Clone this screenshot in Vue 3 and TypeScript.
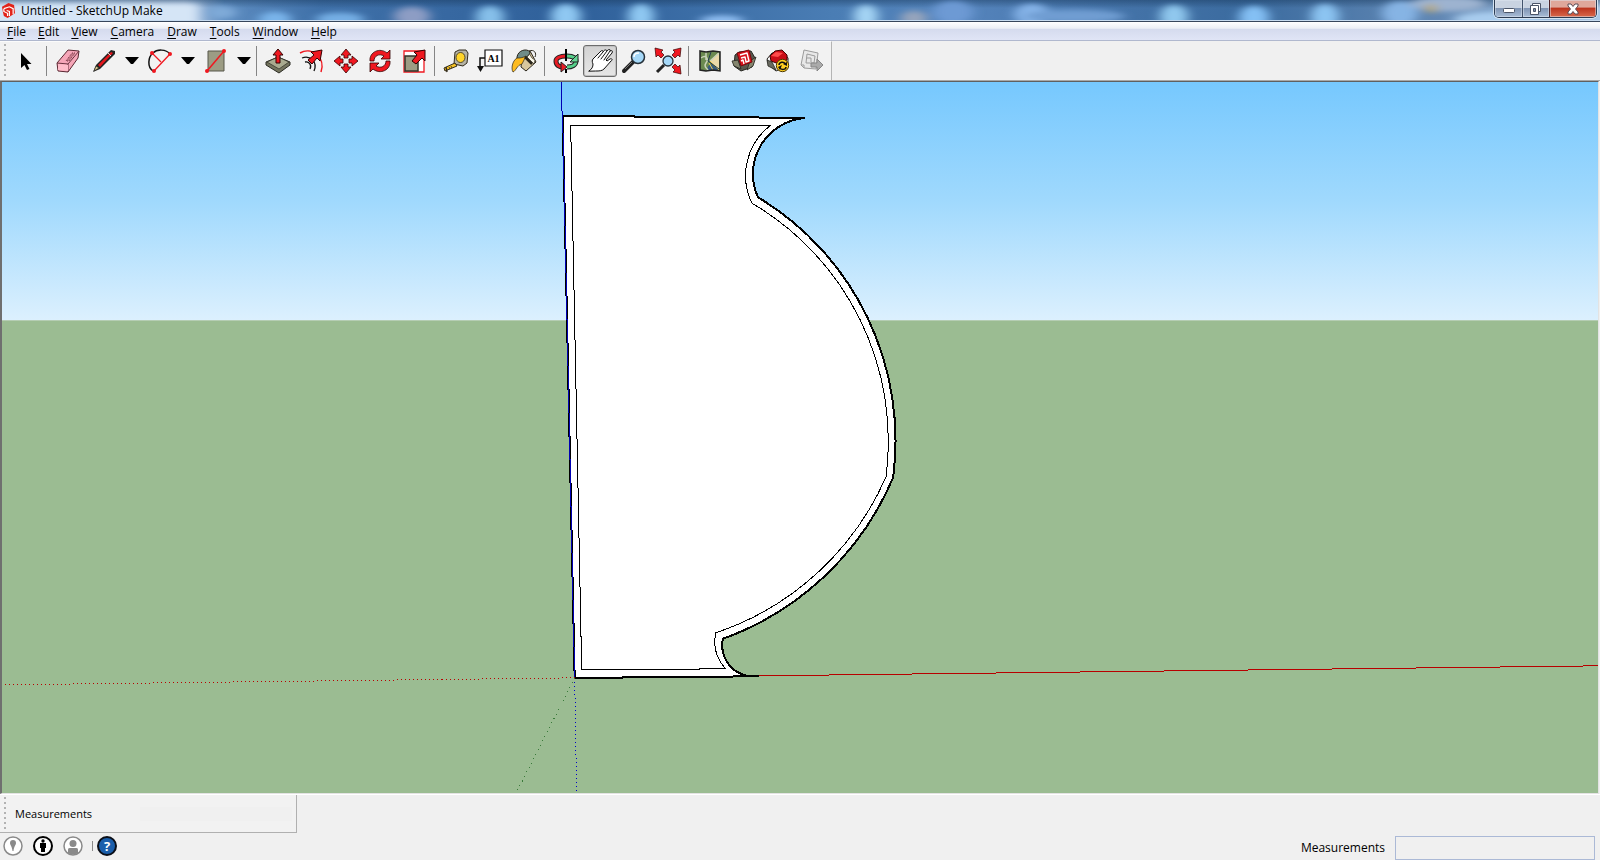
<script setup lang="ts">
import { ref } from 'vue'

const menus: string[] = ['File', 'Edit', 'View', 'Camera', 'Draw', 'Tools', 'Window', 'Help']

interface Tool { id: string; label: string; drop?: boolean }

const groups: Tool[][] = [
  [{ id: 'select', label: 'Select' }],
  [
    { id: 'eraser', label: 'Eraser' },
    { id: 'line', label: 'Line', drop: true },
    { id: 'arc', label: 'Arc', drop: true },
    { id: 'rect', label: 'Rectangle', drop: true },
  ],
  [
    { id: 'push', label: 'Push/Pull' },
    { id: 'offset', label: 'Offset' },
    { id: 'move', label: 'Move' },
    { id: 'rotate', label: 'Rotate' },
    { id: 'scale', label: 'Scale' },
  ],
  [
    { id: 'tape', label: 'Tape Measure' },
    { id: 'text', label: 'Text' },
    { id: 'paint', label: 'Paint Bucket' },
  ],
  [
    { id: 'orbit', label: 'Orbit' },
    { id: 'pan', label: 'Pan' },
    { id: 'zoom', label: 'Zoom' },
    { id: 'extents', label: 'Zoom Extents' },
  ],
  [
    { id: 'map', label: 'Add Location' },
    { id: 'warehouse', label: '3D Warehouse' },
    { id: 'extension', label: 'Extension Warehouse' },
    { id: 'layout', label: 'Send to LayOut' },
  ],
]

const active = ref('pan')
const measure = ref('')
const dockMeasure = ref('')

interface Glow { x: number; y: number; w: number; h: number; c: string }
const glows: Glow[] = [
  { x: 275, y: 20, w: 16, h: 8, c: '#79b4ea' },
  { x: 340, y: 20, w: 24, h: 7, c: '#74aee4' },
  { x: 412, y: 17, w: 18, h: 10, c: '#8d9dc4' },
  { x: 490, y: 18, w: 14, h: 12, c: '#86c0ea' },
  { x: 566, y: 17, w: 15, h: 13, c: '#8fc8f2' },
  { x: 641, y: 17, w: 13, h: 13, c: '#8fc8f2' },
  { x: 722, y: 21, w: 22, h: 5, c: '#8dbcf0' },
  { x: 866, y: 17, w: 12, h: 12, c: '#a4d4f4' },
  { x: 914, y: 19, w: 13, h: 8, c: '#96a4bc' },
  { x: 953, y: 13, w: 20, h: 12, c: '#6d9ad4' },
  { x: 1032, y: 15, w: 18, h: 11, c: '#85b3e8' },
  { x: 1075, y: 17, w: 50, h: 7, c: '#709dd2' },
  { x: 1174, y: 17, w: 14, h: 12, c: '#90c8ee' },
  { x: 1254, y: 18, w: 15, h: 12, c: '#84c0f4' },
  { x: 1325, y: 17, w: 14, h: 13, c: '#8cc4f2' },
  { x: 1400, y: 14, w: 18, h: 13, c: '#86b4e4' },
  { x: 1448, y: 4, w: 38, h: 8, c: '#9db3d0' },
  { x: 1500, y: 20, w: 46, h: 8, c: '#a8ccee' },
]
</script>

<template>
  <div class="window">
    <header class="titlebar">
      <svg class="glass" viewBox="0 0 1600 21" preserveAspectRatio="none" aria-hidden="true">
        <defs>
          <linearGradient id="aero" x1="0" x2="1" y1="0" y2="0">
            <stop offset="0" stop-color="#b9d3ee" />
            <stop offset="0.115" stop-color="#b5cbe6" />
            <stop offset="0.14" stop-color="#5d8cc0" />
            <stop offset="0.2" stop-color="#3f70a8" />
            <stop offset="0.36" stop-color="#2f609a" />
            <stop offset="0.52" stop-color="#4a7db4" />
            <stop offset="0.6" stop-color="#5584bc" />
            <stop offset="0.7" stop-color="#4473a8" />
            <stop offset="0.78" stop-color="#3b6b9f" />
            <stop offset="0.9" stop-color="#6288b4" />
            <stop offset="1" stop-color="#aac8e6" />
          </linearGradient>
          <linearGradient id="shade" x1="0" x2="0" y1="0" y2="1">
            <stop offset="0" stop-color="#17375a" stop-opacity="0.45" />
            <stop offset="0.4" stop-color="#17375a" stop-opacity="0" />
          </linearGradient>
          <filter id="soft" x="-50%" y="-50%" width="200%" height="200%"><feGaussianBlur stdDeviation="6 3" /></filter>
        </defs>
        <rect width="1600" height="21" fill="url(#aero)" />
        <rect width="1600" height="21" fill="url(#shade)" />
        <g filter="url(#soft)">
          <rect x="-10" y="4" width="208" height="24" fill="#d5e5f6" />
          <ellipse v-for="g in glows" :key="g.x" :cx="g.x" :cy="g.y" :rx="g.w" :ry="g.h" :fill="g.c" />
          <ellipse cx="222" cy="13" rx="14" ry="7" fill="#7faad8" />
          <circle cx="1431" cy="9" r="5" fill="#bba765" />
        </g>
      </svg>
      <svg class="appicon" viewBox="0 0 14 16" aria-hidden="true">
        <path d="M0 4 7 0l6 2 1 9-8 5-4-2-1-4z" fill="#e2231a" />
        <path d="M2 6 8 4l4 2v6M2 6v3l4 2v3M5 8l3 1v5" fill="none" stroke="#fff" stroke-width="1.3" />
      </svg>
      <h1 class="title">Untitled - SketchUp Make</h1>
      <div class="controls">
        <button type="button" class="ctl min" aria-label="Minimize">
          <svg viewBox="0 0 14 14" width="14" height="14"><rect x="1.500" y="6.500" width="11" height="4" rx="1" fill="#fff" stroke="#4b5568" /></svg>
        </button>
        <button type="button" class="ctl max" aria-label="Restore">
          <svg viewBox="0 0 14 14" width="14" height="14">
            <path d="M3.500 1.500h8v8h-8z" fill="#fff" stroke="#4b5568" />
            <path d="M1.500 3.500h8v9h-8z" fill="#fff" stroke="#4b5568" />
            <path d="M4.500 6.500h2v3h-2z" fill="#8292ac" stroke="#4b5568" />
          </svg>
        </button>
        <button type="button" class="ctl close" aria-label="Close">
          <svg viewBox="0 0 14 12" width="14" height="12"><path d="M2 1h3l2 2.500L9 1h3v2L9.500 6 12 9v2H9L7 8.500 5 11H2V9l2.500-3L2 3z" fill="#fff" stroke="#5a4a54" /></svg>
        </button>
      </div>
    </header>

    <nav class="menubar">
      <button v-for="m in menus" :key="m" type="button" class="menu"><u>{{ m[0] }}</u>{{ m.slice(1) }}</button>
    </nav>

    <div class="toolrow">
      <div class="toolbar" role="toolbar" aria-label="Getting Started">
        <span class="grip" />
        <template v-for="(group, gi) in groups" :key="gi">
          <span v-if="gi" class="sep" />
          <template v-for="t in group" :key="t.id">
            <button
              type="button"
              :class="['tool', { on: active === t.id, wide: t.drop }]"
              :aria-label="t.label"
              :aria-pressed="active === t.id"
              @click="active = t.id"
            >
              <svg class="icon" viewBox="0 0 24 24">
                <g v-if="t.id === 'select'">
                  <path d="M7 4v15l3.500-3 2.500 5 2.500-1-2.500-5h4.500z" fill="#000" />
                </g>
                <g v-else-if="t.id === 'eraser'" stroke-linejoin="round">
                  <path d="M1 14 12 1l11 1-1 7-10 14-10-1z" fill="#f6a6b8" stroke="#5a2832" />
                  <path d="m1 14 11 1L23 2M12 15v8" fill="none" stroke="#6a3440" />
                  <path d="M2 15l10 1v6L2 21z" fill="#ffbdca" />
                  <path d="m10 12 6-8 3 0-6 8z" fill="#c57888" stroke="#7a3a48" stroke-dasharray="1 1" />
                </g>
                <g v-else-if="t.id === 'line'">
                  <path d="M1 23 4 16 19 1l4 1v3L8 20z" fill="#222" />
                  <path d="M6 16 19 3l2 1L8 18z" fill="#e3161c" />
                  <path d="m2 22 2-5 3 2z" fill="#d9c88b" stroke="#222" stroke-width=".6" />
                  <path d="m16 4 3 3" stroke="#ddd" />
                </g>
                <g v-else-if="t.id === 'arc'" fill="none">
                  <path d="M5 22C-1 18 0 8 5 4 9 0 18 0 22 5" stroke="#111" stroke-width="1.500" />
                  <path d="M6 22 22 5M4 4l9 9" stroke="#f01820" stroke-width="1.300" />
                  <g fill="#f01820"><circle cx="6" cy="22" r="2" /><circle cx="22" cy="5" r="2" /><circle cx="4" cy="4" r="2" /></g>
                </g>
                <g v-else-if="t.id === 'rect'">
                  <path d="M4 2h16v20H4z" fill="#9c9c84" stroke="#56564a" />
                  <path d="M3 22 20 2" stroke="#f01820" stroke-width="1.500" />
                  <circle cx="3" cy="22" r="2" fill="#f01820" /><circle cx="20" cy="2" r="2" fill="#f01820" />
                </g>
                <g v-else-if="t.id === 'push'" stroke-linejoin="round">
                  <path d="m0 13 12-5 12 5v3l-11 8L0 16z" fill="#74745e" stroke="#2c2c24" />
                  <path d="m1 13 11-5 11 5-10 7z" fill="#a9aa8f" stroke="#2c2c24" stroke-width=".7" />
                  <path d="M12 0 7 6h3v8h4V6h3z" fill="#f01820" stroke="#300" />
                </g>
                <g v-else-if="t.id === 'offset'" fill="none">
                  <path d="M0 4C12-3 26 9 21 23" stroke="#f01820" stroke-width="1.500" />
                  <path d="M2 9c8-3 16 4 12 13M5 13c4-1 7 3 5 7" stroke="#111" stroke-width="1.300" />
                  <path d="m8 11 6-5-3-3 11-2-2 11-3-3-5 6z" fill="#f01820" stroke="#300" />
                </g>
                <g v-else-if="t.id === 'move'" fill="#f01820" stroke="#300" stroke-width=".8">
                  <path d="m12 0 5 6h-3v3h-4V6H7z" /><path d="m12 24-5-6h3v-3h4v3h3z" />
                  <path d="m0 12 6-5v3h3v4H6v3z" /><path d="m24 12-6 5v-3h-3v-4h3V7z" />
                </g>
                <g v-else-if="t.id === 'rotate'" fill="#f01820" stroke="#300" stroke-width=".8" stroke-linejoin="round">
                  <path d="M2 12C1 3 12-2 19 4l3-3v9h-9l3-3C11 4 6 7 6 12z" />
                  <path d="M22 12c1 9-10 14-17 8l-3 3v-9h9l-3 3c5 3 10 0 10-5z" />
                </g>
                <g v-else-if="t.id === 'scale'">
                  <path d="M2 2h20v21H2z" fill="#fff" stroke="#f01820" stroke-width="1.300" />
                  <path d="M3 7h13v15H3z" fill="#9c9c84" stroke="#33332a" stroke-width="1.500" />
                  <path d="m10 12 5-6-3-3 11-2v11l-3-3-6 6z" fill="#f01820" stroke="#300" />
                </g>
                <g v-else-if="t.id === 'tape'" stroke="#332c1c">
                  <path d="m11 3 4-2 7 0 2 3-1 10-4 3-9-2z" fill="#b5b3a5" />
                  <ellipse cx="16.500" cy="8.500" rx="4.500" ry="5" fill="#ffd429" stroke-width=".8" />
                  <path d="M11 14 0 19l1 3 12-5z" fill="#f7c324" />
                  <path d="m2 18 1 5" stroke-width="1.500" /><path d="m5 18 1 2m1-3 1 2" stroke-width=".8" />
                </g>
                <g v-else-if="t.id === 'text'">
                  <path d="M7 1h17v16H7z" fill="#fff" stroke="#111" stroke-width="1.200" />
                  <path d="M7 9H2v9" fill="none" stroke="#111" stroke-width="1.500" /><path d="M-1 17h7l-3.500 6z" fill="#111" />
                  <text x="15.500" y="13" class="glyph" text-anchor="middle">A1</text>
                </g>
                <g v-else-if="t.id === 'paint'" stroke="#2a261c" stroke-linejoin="round">
                  <path d="m10 8 8-6 6 11-10 9-5-4z" fill="#d8c79e" />
                  <path d="m17 4 3 5 3 2-1 4-7-7z" fill="#faf7ea" stroke-width=".7" />
                  <path d="M5 8C6 1 15-1 18 3c0 4-6 7-13 7z" fill="#6f8c88" />
                  <path d="M5 9C0 12-1 20 1 23c3-1 4-7 9-8l4-8c-4 2-6 2-9 2z" fill="#fdbb20" stroke-width=".7" />
                  <path d="M13 8 20 15" stroke-width="2.500" /><path d="M17 2c5-2 8 2 6 6" fill="none" />
                </g>
                <g v-else-if="t.id === 'orbit'" fill="none" stroke="#222">
                  <path d="M13 7c6 0 9 2 9 5 0 4-4 6-9 6" stroke-width="5" /><path d="M13 7c6 0 9 2 9 5 0 4-4 6-9 6" stroke="#56cf8a" stroke-width="3" />
                  <path d="M24 5v8h-8z" fill="#64d694" />
                  <path d="M12 7c-6 0-10 2-10 5 0 4 3 6 7 6" stroke-width="5" /><path d="M12 7c-6 0-10 2-10 5 0 4 3 6 7 6" stroke="#e81c24" stroke-width="3" />
                  <path d="m7 13 6 5-6 5z" fill="#e81c24" />
                  <path d="M12 0v12M12 20v4" stroke="#000" stroke-width="2" />
                </g>
                <g v-else-if="t.id === 'pan'" fill="#fff" stroke="#111" stroke-linejoin="round" stroke-linecap="round">
                  <path d="M1 22c3-2 4-4 4-7-1-2-1-4 0-5l4-4 4-4c1-1 3 0 2 1 1-2 3-3 4-1 1-2 4-2 3 0 2-1 3 0 2 2l-6 7 1 1 3-2c2-1 3 1 1 2l-7 8c-2 2-5 2-8 2z" />
                  <path d="m15 3-5 6m9-7-6 8m9-8-6 9" fill="none" />
                </g>
                <g v-else-if="t.id === 'zoom'">
                  <path d="m2 22 9-9" stroke="#222" stroke-width="4" stroke-linecap="round" /><path d="m3 20 7-7" stroke="#777" />
                  <circle cx="16" cy="8" r="6.500" fill="#a5d8f8" stroke="#26313a" stroke-width="1.500" /><path d="M12 8c0-3 2-4 5-4" fill="none" stroke="#fff" stroke-width="1.500" />
                </g>
                <g v-else-if="t.id === 'extents'">
                  <path d="m1 23 7-7" stroke="#222" stroke-width="3" />
                  <circle cx="12" cy="12" r="5" fill="#a5d8f8" stroke="#26313a" stroke-width="1.300" />
                  <g fill="#f01820" stroke="#300" stroke-width=".7">
                    <path d="m-1-1 8 2-2 2 3 3-3 3-3-3-2 2z" /><path d="m25-1-8 2 2 2-3 3 3 3 3-3 2 2z" /><path d="m25 25-8-2 2-2-3-3 3-3 3 3 2-2z" />
                  </g>
                </g>
                <g v-else-if="t.id === 'map'">
                  <path d="m2 2 6 1 7-1 7 1v19l-7-1-7 1-6-1z" fill="#6b8a50" />
                  <path d="M21 3v18l-9-9z" fill="#ead9a8" /><path d="M9 21c0-3 2-5 4-6l8 6-6 0z" fill="#375b80" />
                  <path d="M3 9c5-4 8 1 5 5s1 5 2 7M8 3v8M21 4l-9 8" fill="none" stroke="#c9d2b8" stroke-width="1.500" />
                  <path d="m12 12 9 9M11 14l4 7" stroke="#f0d052" /><path d="M13 3 10 12l11 8" fill="none" stroke="#233a50" />
                  <path d="m2 2 6 1 7-1 7 1v19l-7-1-7 1-6-1z" fill="none" stroke="#222" stroke-width="1.500" />
                </g>
                <g v-else-if="t.id === 'warehouse'" stroke-linejoin="round">
                  <path d="m3 6 4-3 12-1 4 7-3 9-11 4-7-5z" fill="#58594e" stroke="#252520" />
                  <path d="m0 12 6-1 3 9-7-3zM18 12l6-4-3 9-6 4z" fill="#85866f" stroke="#252520" stroke-width=".8" />
                  <path d="m5 4 12-3 3 12-11 4z" fill="#d9121b" stroke="#750a0e" />
                  <path d="m8 6 7-2 2 8-3 1-1-5-4 1m0 3 2-1 1 4" fill="none" stroke="#fff" stroke-width="1.400" />
                </g>
                <g v-else-if="t.id === 'extension'" stroke-linejoin="round">
                  <path d="m1 10 5-6 11-1 5 6 0 8-12 5-7-6z" fill="#f2f2f2" stroke="#252520" />
                  <path d="m4 7 5-5 7-1 5 5v5l-8 4-8-3z" fill="#c90d17" stroke="#400" /><path d="m5 7 5-4 7 1-5 4z" fill="#ff4b4b" />
                  <path d="m1 11 5 2 4 8-8-4z" fill="#696a60" stroke="#252520" stroke-width=".8" />
                  <circle cx="16.500" cy="16.500" r="6.200" fill="#ffce21" stroke="#493500" />
                  <path d="M13 16c0-3 5-4 6-1m1 3c0 3-5 3-6 1" fill="none" stroke="#111" stroke-width="1.500" /><path d="m17 15 4-2v4zM12 18l4-2-2 5z" fill="#111" />
                </g>
                <g v-else fill="#e8e8e8" stroke="#9b9b9b" stroke-linejoin="round">
                  <path d="m4 1 14 3-2 16-12-1-3-3z" /><path d="M1 16h3v3M7 5l8 2-1 7H6zM7 9h4v4" fill="none" />
                  <path d="M11 14h6v-4l6 6-6 6v-4h-6z" fill="#aaa" stroke="#858585" />
                </g>
              </svg>
            </button>
            <button v-if="t.drop" type="button" class="caret" :aria-label="t.label + ' tools'">
              <svg viewBox="0 0 14 8" width="14" height="8"><path d="M0 0h14L8 7H6z" fill="#000" /></svg>
            </button>
          </template>
        </template>
      </div>
    </div>

    <main class="viewport">
      <svg class="scene" viewBox="2 82 1596 710" preserveAspectRatio="xMidYMid slice" role="img" aria-label="Model view">
        <defs>
          <linearGradient id="sky" x1="0" x2="0" y1="0" y2="1">
            <stop offset="0" stop-color="#76c8fe" />
            <stop offset="0.5" stop-color="#a0d9fd" />
            <stop offset="1" stop-color="#dcf0fe" />
          </linearGradient>
        </defs>
        <rect x="2" y="82" width="1596" height="238" fill="url(#sky)" />
        <rect x="2" y="320" width="1596" height="473" fill="#9bbc92" />
        <g fill="none" shape-rendering="crispEdges">
          <path d="M563 116 720 117 805 118A56 56 0 0 0 758 197A284 284 0 0 1 893 477A292 292 0 0 1 723 638A31 31 0 0 0 759 675L720 676 575 677z" fill="#fff" stroke="#000" stroke-width="2" />
          <path d="M571 125H771A63 63 0 0 0 752 203A276 276 0 0 1 886 476A284 284 0 0 1 716 632A38 38 0 0 0 726 668L582 669z" stroke="#000" />
          <path d="M562 82V108L563 116 575 677" stroke="#0000b4" />
          <path d="M575 677 2 684" stroke="#b80000" stroke-dasharray="1 3" />
          <path d="M759 675 1598 665" stroke="#b80000" />
          <path d="M575 677 577 793" stroke="#0000c8" stroke-dasharray="1 3" />
          <path d="M575 677 516 793" stroke="#3a7a3a" stroke-dasharray="1 4" />
        </g>
      </svg>
    </main>

    <section class="dock">
      <div class="panel">
        <span class="grip" />
        <label for="dock-measure">Measurements</label>
        <input id="dock-measure" v-model="dockMeasure" type="text" />
      </div>
    </section>

    <footer class="status">
      <button type="button" class="round" aria-label="Geo-location">
        <svg viewBox="0 0 20 20"><circle cx="10" cy="10" r="9" fill="#fff" stroke="#8a8a8a" stroke-width="1.500" /><path d="M10 4a3 3 0 0 1 3 3c0 2-2 3-2.500 8h-1C9 10 7 9 7 7a3 3 0 0 1 3-3z" fill="#8a8a8a" /></svg>
      </button>
      <button type="button" class="round" aria-label="Credits">
        <svg viewBox="0 0 20 20"><circle cx="10" cy="10" r="9" fill="#fff" stroke="#000" stroke-width="2" /><circle cx="10" cy="5" r="1.700" /><path d="M7 7h6v5h-1v4H8v-4H7z" /></svg>
      </button>
      <button type="button" class="round" aria-label="Sign in">
        <svg viewBox="0 0 20 20"><circle cx="10" cy="10" r="9" fill="#fff" stroke="#8a8a8a" stroke-width="1.500" /><circle cx="10" cy="7.500" r="3.500" fill="#8a8a8a" /><path d="M5 17v-3c0-2 1-2 3-2h4c2 0 3 0 3 2v3c-3 2-7 2-10 0z" fill="#8a8a8a" /></svg>
      </button>
      <span class="bar" />
      <button type="button" class="round help" aria-label="Help">?</button>
      <div class="vcb">
        <label for="vcb">Measurements</label>
        <input id="vcb" v-model="measure" type="text" />
      </div>
    </footer>
  </div>
</template>

<style>
html,
body,
#app {
  height: 100%;
}
</style>

<style scoped>
.window {
  display: flex;
  flex-direction: column;
  height: 100%;
  overflow: hidden;
  background: #f0f0f0;
  font: 12px/16px "Open Sans", "Noto Sans", sans-serif;
  color: #000;
}
button {
  padding: 0;
  border: 0;
  background: none;
  font: inherit;
  color: inherit;
}
button svg {
  display: block;
}
.titlebar {
  position: relative;
  display: flex;
  align-items: flex-start;
  height: 22px;
  box-sizing: border-box;
  border-bottom: 1px solid #38475c;
  flex: none;
}
.glass {
  position: absolute;
  inset: 0;
  width: 100%;
  height: 20px;
  border-bottom: 1px solid #c8dcf0;
}
.appicon {
  position: relative;
  width: 13px;
  height: 15px;
  margin: 3px 6px 0 2px;
}
.title {
  position: relative;
  margin: 3px 0 0;
  font-size: 12px;
  line-height: 16px;
  font-weight: 400;
}
.controls {
  position: relative;
  display: flex;
  margin: 0 3px 0 auto;
  height: 18px;
  box-sizing: border-box;
  border: 1px solid #2c3c52;
  border-top: 0;
  border-radius: 0 0 5px 5px;
  box-shadow: 0 0 0 1px #d5e4f2;
  overflow: hidden;
}
.ctl {
  display: grid;
  place-items: center;
  width: 27px;
  background: linear-gradient(#c9d3e1 0 45%, #8095b4 50%, #a9bdd6);
  box-shadow: inset 0 0 0 1px #dfe8f280;
}
.max {
  border-left: 1px solid #42536c;
}
.close {
  width: 47px;
  border-left: 1px solid #4c2226;
  background: linear-gradient(#dfa79b 0 40%, #bd3620 50%, #d8694c);
}
.menubar {
  display: flex;
  flex: none;
  height: 19px;
  box-sizing: border-box;
  padding-left: 1px;
  border-bottom: 1px solid #b0b8ce;
  background: linear-gradient(#fff 0, #eceff6 35%, #d5dbee 40%, #e0e5f6);
}
.menu {
  padding: 2px 6px 0;
}
.menu:nth-child(n + 3) {
  padding-right: 7px;
}
.menu u {
  text-underline-offset: 2px;
}
.toolrow {
  flex: none;
  height: 40px;
  box-sizing: border-box;
  border-bottom: 1px solid #a8a8a8;
}
.toolbar {
  display: flex;
  align-items: center;
  width: fit-content;
  height: 39px;
  box-sizing: border-box;
  padding-right: 2px;
  border-top: 1px solid #fbfbfb;
  border-right: 1px solid #b4b4b4;
  background: #f2f2f2;
}
.grip {
  flex: none;
  width: 2px;
  height: 34px;
  margin: 0 3px 0 4px;
  background: repeating-linear-gradient(#b2b2b2 0 2px, transparent 2px 5px);
}
.sep {
  width: 1px;
  height: 30px;
  margin: 0 4px 0 3px;
  background: #858585;
}
.tool {
  display: grid;
  place-items: center;
  width: 34px;
  height: 32px;
}
.wide {
  width: 37px;
}
.on {
  box-sizing: border-box;
  border: 1px solid #6c6c6c;
  border-radius: 3px;
  background: linear-gradient(#d2d2d2, #e6e6e6);
  box-shadow: inset 0 0 0 1px #c0c0c0;
}
.icon {
  width: 24px;
  height: 24px;
  overflow: visible;
}
.glyph {
  font: bold 10px "Liberation Serif", serif;
}
.caret {
  display: grid;
  place-items: center;
  width: 19px;
  height: 32px;
}
.viewport {
  flex: 1;
  min-height: 0;
  margin-right: 1px;
  border-top: 1px solid #606060;
  border-left: 2px solid #6f6f6f;
  border-right: 1px solid #e3e3e3;
  border-bottom: 1px solid #e3e3e3;
}
.scene {
  display: block;
  width: 100%;
  height: 100%;
}
.dock {
  flex: none;
  border-top: 1px solid #fff;
}
.panel {
  display: flex;
  align-items: center;
  width: 297px;
  height: 38px;
  box-sizing: border-box;
  border-right: 1px solid #b0b0b0;
  border-bottom: 1px solid #b0b0b0;
  background: #f2f2f2;
}
.panel label {
  margin-left: 6px;
  font-size: 11px;
}
.panel input {
  flex: 1;
  min-width: 0;
  height: 14px;
  margin: 0 4px 0 48px;
  padding: 0;
  border: 0;
  background: #f0f0f0;
}
.status {
  display: flex;
  flex: none;
  align-items: center;
  gap: 10px;
  height: 27px;
  box-sizing: border-box;
  padding: 0 5px 1px 3px;
}
.round {
  flex: none;
  width: 20px;
  height: 20px;
}
.bar {
  width: 1px;
  height: 10px;
  margin: 0 -6px 0 -1px;
  background: #8a8a8a;
}
.help {
  box-sizing: border-box;
  border: 2px solid #0b0f18;
  border-radius: 50%;
  background: #1a5eab;
  color: #fff;
  font-size: 13px;
  line-height: 16px;
  font-weight: 700;
}
.vcb {
  display: flex;
  align-items: center;
  gap: 10px;
  margin-left: auto;
  padding-top: 3px;
}
.vcb input {
  width: 200px;
  height: 24px;
  box-sizing: border-box;
  border: 1px solid #abb9d6;
  background: #f0f0f0;
}
</style>
